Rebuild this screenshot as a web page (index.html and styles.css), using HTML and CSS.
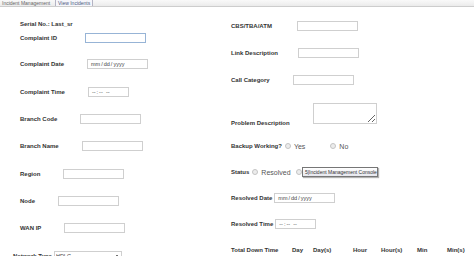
FILE: index.html
```html
<!DOCTYPE html>
<html lang="en">
<head>
    <meta charset="UTF-8">
    <title>Incident Management</title>
    <link rel="stylesheet" href="styles.css">
</head>
<body>
    <div class="tabs">
        <span class="tab">Incident Management</span>
        <span class="tab tab-link">View Incidents</span>
    </div>
    <form class="form">
        <div class="col col-left">
            <div class="row row-serial"><span class="label">Serial No.: Last_sr</span></div>
            <div class="row row-id">
                <label class="label" for="cid">Complaint ID</label>
                <input class="field field-focus field-id" id="cid" type="text">
            </div>
            <div class="row">
                <label class="label" for="cdate">Complaint Date</label>
                <input class="field" id="cdate" type="date">
            </div>
            <div class="row">
                <label class="label" for="ctime">Complaint Time</label>
                <input class="field field-short" id="ctime" type="time">
            </div>
            <div class="row">
                <label class="label" for="bcode">Branch Code</label>
                <input class="field" id="bcode" type="text">
            </div>
            <div class="row">
                <label class="label" for="bname">Branch Name</label>
                <input class="field" id="bname" type="text">
            </div>
            <div class="row">
                <label class="label" for="region">Region</label>
                <input class="field" id="region" type="text">
            </div>
            <div class="row">
                <label class="label" for="node">Node</label>
                <input class="field" id="node" type="text">
            </div>
            <div class="row">
                <label class="label" for="wanip">WAN IP</label>
                <input class="field" id="wanip" type="text">
            </div>
            <div class="row row-network">
                <label class="label" for="ntype">Network Type</label>
                <span class="select">
                    <select class="field field-select" id="ntype">
                        <option>HDLC</option>
                    </select>
                </span>
            </div>
        </div>
        <div class="col col-right">
            <div class="row row-top">
                <label class="label" for="cbs">CBS/TBA/ATM</label>
                <input class="field field-cbs" id="cbs" type="text">
            </div>
            <div class="row row-top">
                <label class="label" for="link">Link Description</label>
                <input class="field field-link" id="link" type="text">
            </div>
            <div class="row row-top">
                <label class="label" for="call">Call Category</label>
                <input class="field" id="call" type="text">
            </div>
            <div class="row row-problem">
                <label class="label" for="problem">Problem Description</label>
                <textarea class="field field-area" id="problem"></textarea>
            </div>
            <div class="row row-low">
                <span class="label">Backup Working?</span>
                <input class="radio radio-first" type="radio" name="backup" id="byes">
                <label class="option" for="byes">Yes</label>
                <input class="radio radio-next" type="radio" name="backup" id="bno">
                <label class="option" for="bno">No</label>
            </div>
            <div class="row row-low">
                <span class="label">Status</span>
                <input class="radio radio-status" type="radio" name="status" id="sres">
                <label class="option" for="sres">Resolved</label>
                <input class="radio radio-pending" type="radio" name="status" id="spen">
                <label class="option" for="spen">Pending</label>
            </div>
            <div class="row row-low">
                <label class="label" for="rdate">Resolved Date</label>
                <input class="field field-tight" id="rdate" type="date">
            </div>
            <div class="row row-low">
                <label class="label" for="rtime">Resolved Time</label>
                <input class="field field-tight field-short" id="rtime" type="time">
            </div>
            <div class="row row-low downtime">
                <span class="label">Total Down Time</span>
                <span class="label">Day</span>
                <span class="label">Day(s)</span>
                <span class="label">Hour</span>
                <span class="label">Hour(s)</span>
                <span class="label">Min</span>
                <span class="label">Min(s)</span>
            </div>
        </div>
        <div class="tooltip">5|Incident Management Console</div>
    </form>
</body>
</html>
```

FILE: styles.css
```css
body {
    margin: 0;
    font-family: "Liberation Sans", Arial, sans-serif;
    color: #333;
    background-color: #fff;
    overflow: hidden;
}
.tabs {
    display: flex;
    align-items: flex-end;
    height: 6px;
    padding-left: 2px;
    background: linear-gradient(#f9f9f9, #ebebeb);
    border-bottom: 1px solid #cdcdcd;
    font-size: 5px;
    line-height: 6px;
}
.tab {
    color: #666;
}
.tab-link {
    margin-left: 5px;
    padding: 0 2px;
    line-height: 6px;
    color: #4a5a80;
    background-color: #f6f6fb;
    border: 1px solid #b4b4c4;
    border-bottom: 0;
}
.form {
    display: flex;
    position: relative;
    margin: 0;
}
.col {
    display: flex;
    flex-direction: column;
}
.col-left {
    width: 231px;
    box-sizing: border-box;
    padding: 12px 0 0 20px;
}
.col-right {
    padding-top: 5.5px;
}
.row {
    display: flex;
    align-items: center;
    height: 27.33px;
    box-sizing: border-box;
}
.row-serial {
    height: 10px;
}
.row-id {
    height: 21.67px;
    align-items: flex-start;
    padding-top: 4px;
}
.row-top {
    height: 27px;
}
.row-problem {
    height: 39.5px;
    align-items: flex-end;
    padding-bottom: 5px;
}
.row-low {
    height: 26px;
}
.row-network .label {
    margin-left: -7px;
}
.label {
    font-size: 6px;
    font-weight: bold;
    line-height: 10px;
    color: #333;
    white-space: nowrap;
}
.field {
    width: 61px;
    height: 10px;
    box-sizing: border-box;
    margin: 0 0 0 23px;
    padding: 0 2px;
    border: 1px solid #cfcfcf;
    border-radius: 0;
    background-color: #fff;
    font-family: "Liberation Sans", Arial, sans-serif;
    font-size: 5.5px;
    color: #444;
}
.field::-webkit-calendar-picker-indicator {
    display: none;
}
.field::-webkit-datetime-edit {
    padding: 0;
}
.field-focus {
    border-color: #97b4d6;
    outline: none;
}
.field-id {
    margin-left: 28px;
}
.field-short {
    width: 41px;
}
.field-cbs {
    margin-left: 25px;
}
.field-link {
    margin-left: 20px;
}
.field-tight {
    margin-left: 2px;
}
.select {
    position: relative;
    display: flex;
    margin-left: 2px;
}
.select::after {
    content: "";
    position: absolute;
    right: 4px;
    top: 4px;
    border-left: 1.5px solid transparent;
    border-right: 1.5px solid transparent;
    border-top: 2px solid #444;
}
.field-select {
    appearance: none;
    width: 68px;
    margin-left: 0;
    padding: 0 1px;
}
.field-area {
    width: 64px;
    height: 21px;
    margin-bottom: 4px;
    resize: both;
}
.radio {
    appearance: none;
    width: 6px;
    height: 6px;
    margin: 0;
    border: 1px solid #c4c4c4;
    border-radius: 50%;
    background-color: #ececec;
}
.radio-first {
    margin-left: 3px;
}
.radio-next {
    margin-left: 25px;
}
.radio-status {
    margin-left: 3px;
}
.radio-pending {
    margin-left: 5px;
}
.option {
    margin-left: 3px;
    font-size: 7px;
    color: #555;
}
.downtime {
    display: grid;
    grid-template-columns: 61px 21px 40px 28px 36px 30px auto;
    align-items: center;
}
.tooltip {
    position: absolute;
    left: 302px;
    top: 160px;
    width: 76px;
    height: 10px;
    box-sizing: border-box;
    padding: 0 2px;
    border: 1px solid #767676;
    background: linear-gradient(#fff, #e6e7ee);
    box-shadow: 1px 1px 1px rgba(0, 0, 0, 0.3);
    font-size: 5px;
    line-height: 8px;
    color: #333;
    white-space: nowrap;
}
```
